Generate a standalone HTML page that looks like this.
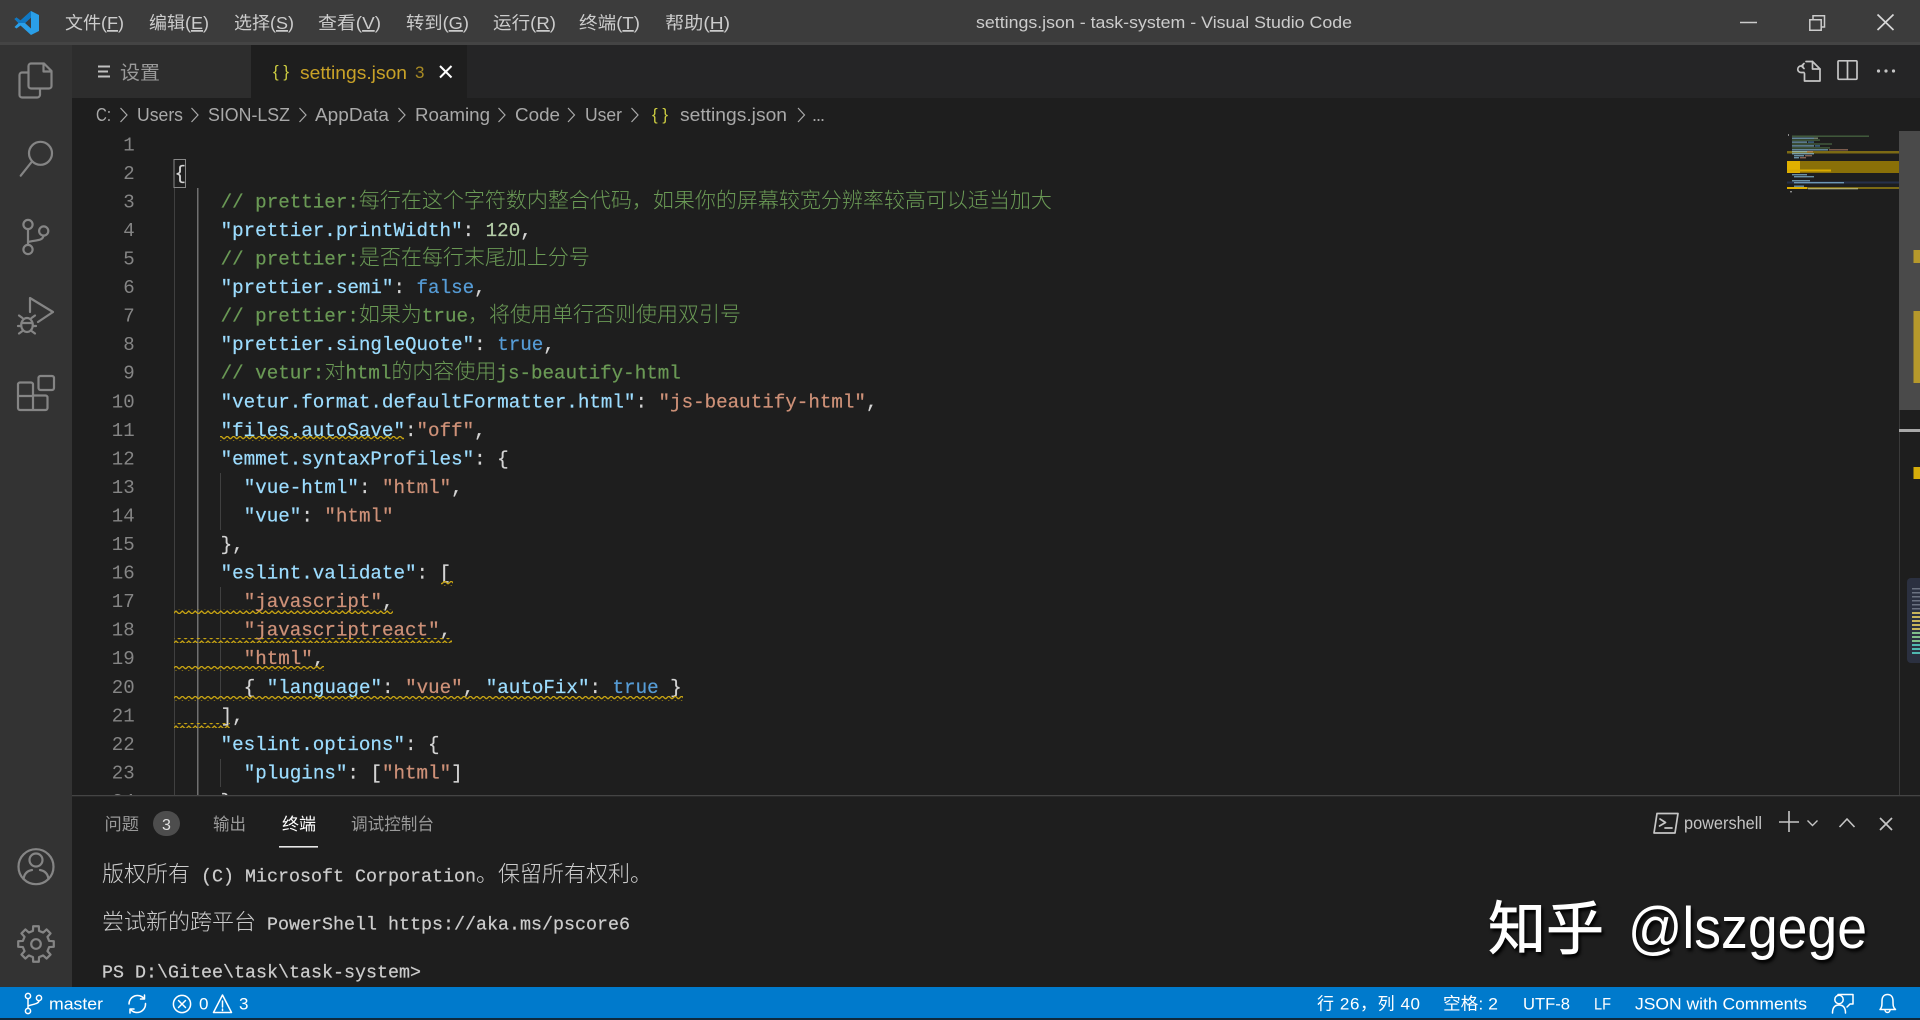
<!DOCTYPE html>
<html lang="zh">
<head>
<meta charset="utf-8">
<title>settings.json - task-system - Visual Studio Code</title>
<style>
html,body{margin:0;padding:0;background:#1e1e1e;width:1920px;height:1020px;overflow:hidden}
svg{display:block;position:absolute;left:0;top:0}
text{white-space:pre}
.ui{font-family:"Liberation Sans","Noto Sans CJK SC",sans-serif;font-size:18px;fill:#cccccc}
.m{font-family:"Liberation Mono","Noto Sans CJK SC",monospace;font-size:19.22px;fill:#d4d4d4;stroke-width:.22}
.ln{fill:#858585;text-anchor:end;font-size:19.08px}
.k{fill:#9cdcfe;stroke:#9cdcfe}.s{fill:#ce9178;stroke:#ce9178}.n{fill:#b5cea8;stroke:#b5cea8}.b{fill:#569cd6;stroke:#569cd6}.c{fill:#6a9955;stroke:#6a9955}.p{fill:#d4d4d4;stroke:#d4d4d4}
.z{font-size:21px;font-family:"Noto Sans CJK SC",sans-serif;font-weight:300;stroke:none}
.t{font-family:"Liberation Mono","Noto Sans CJK SC",monospace;font-size:18.33px;fill:#cccccc;stroke:#cccccc;stroke-width:.22}
.tz{font-size:22px;font-family:"Noto Sans CJK SC",sans-serif;font-weight:300;stroke:none}
.ico{fill:none;stroke:#858585;stroke-width:2.2;stroke-linecap:round;stroke-linejoin:round}
.i2{fill:none;stroke:#c5c5c5;stroke-width:1.7;stroke-linecap:round;stroke-linejoin:round}
.i3{fill:none;stroke:#ffffff;stroke-width:1.5;stroke-linecap:round;stroke-linejoin:round}
.mn{font-size:17.5px}
.bc{fill:#a9a9a9;font-size:18px}
.st{fill:#ffffff;font-size:17px}
.pt{fill:#9a9a9a;font-size:17px}
</style>
</head>
<body>
<svg width="1920" height="1020" viewBox="0 0 1920 1020" xmlns="http://www.w3.org/2000/svg">
<defs>
<pattern id="sq" width="6.4" height="5" patternUnits="userSpaceOnUse">
<path d="M0 4 L3.2 1 L6.4 4" fill="none" stroke="#c9a512" stroke-width="1.3"/>
</pattern>
<clipPath id="ed"><rect x="72" y="130" width="1848" height="665"/></clipPath>
</defs>

<!-- base backgrounds -->
<rect x="0" y="0" width="1920" height="1020" fill="#1e1e1e"/>
<rect x="0" y="0" width="1920" height="45" fill="#3c3c3c"/>
<rect x="0" y="42" width="1920" height="3" fill="#444444"/>
<rect x="0" y="45" width="72" height="942" fill="#333333"/>
<rect x="72" y="45" width="1848" height="53" fill="#252526"/>
<rect x="72" y="45" width="179" height="53" fill="#2d2d2d"/>
<rect x="251" y="45" width="216" height="53" fill="#1e1e1e"/>

<!-- title bar -->
<path fill-rule="evenodd" fill="#2a9fe8" d="M31 11 L20.5 20.5 L16.5 17.5 L14.5 19 L18.5 23 L14.5 27 L16.5 28.5 L20.5 25.5 L31 35 L39 31 V15 Z M31 17.5 L25 23 L31 28.5 Z"/>
<path fill="#0f78c4" d="M31 11 L20.5 20.5 L16.5 17.5 L14.5 19 L18.5 23 L25 23 L31 17.5 Z"/>
<g class="ui mn">
<text x="65" y="29" textLength="59" lengthAdjust="spacingAndGlyphs">文件(<tspan text-decoration="underline">F</tspan>)</text>
<text x="149" y="29" textLength="60" lengthAdjust="spacingAndGlyphs">编辑(<tspan text-decoration="underline">E</tspan>)</text>
<text x="234" y="29" textLength="60" lengthAdjust="spacingAndGlyphs">选择(<tspan text-decoration="underline">S</tspan>)</text>
<text x="318" y="29" textLength="63" lengthAdjust="spacingAndGlyphs">查看(<tspan text-decoration="underline">V</tspan>)</text>
<text x="406" y="29" textLength="63" lengthAdjust="spacingAndGlyphs">转到(<tspan text-decoration="underline">G</tspan>)</text>
<text x="493" y="29" textLength="63" lengthAdjust="spacingAndGlyphs">运行(<tspan text-decoration="underline">R</tspan>)</text>
<text x="579" y="29" textLength="61" lengthAdjust="spacingAndGlyphs">终端(<tspan text-decoration="underline">T</tspan>)</text>
<text x="665" y="29" textLength="65" lengthAdjust="spacingAndGlyphs">帮助(<tspan text-decoration="underline">H</tspan>)</text>
</g>
<text class="ui" x="976" y="28" textLength="376" lengthAdjust="spacingAndGlyphs" style="font-size:17px">settings.json - task-system - Visual Studio Code</text>
<!-- window controls -->
<path d="M1740 22.5 H1757" stroke="#cccccc" stroke-width="1.5" fill="none"/>
<path d="M1809.8 19.8 H1821.2 V30.2 H1809.8 Z M1813 19.5 V15.8 H1824.5 V27 H1821" stroke="#cccccc" stroke-width="1.5" fill="none"/>
<path d="M1877.5 14.5 L1893.5 30 M1893.5 14.5 L1877.5 30" stroke="#d8d8d8" stroke-width="1.7" fill="none"/>

<!-- tabs -->
<path d="M98 66.5 H110 M98 71.5 H108 M98 76.5 H110" stroke="#c0c0c0" stroke-width="2" fill="none"/>
<text class="ui" x="120" y="79" textLength="40" lengthAdjust="spacingAndGlyphs" style="fill:#9a9a9a;font-size:19px">设置</text>
<text class="ui" x="273" y="77" textLength="16" lengthAdjust="spacing" style="fill:#cbcb41;font-size:17px">{}</text>
<text class="ui" x="300" y="79" textLength="107" lengthAdjust="spacingAndGlyphs" style="fill:#c9a227;font-size:18px">settings.json</text>
<text class="ui" x="415" y="78" style="fill:#a88a24;font-size:17px">3</text>
<path d="M440 66 L451.5 77.5 M451.5 66 L440 77.5" stroke="#ffffff" stroke-width="2" fill="none"/>
<!-- editor actions -->
<path class="i2" d="M1806 61.5 H1812.5 L1820 69 V81 H1804.5 V73.5"/>
<path class="i2" d="M1812.5 61.5 V69 H1820"/>
<path class="i2" d="M1803 66 H1801 A3.2 3.2 0 0 0 1801 72.5 H1804 M1804 63.5 L1801.5 66 L1804 68.5" stroke-width="1.4"/>
<rect class="i2" x="1838" y="60.8" width="19" height="18.5" rx="1"/>
<path class="i2" d="M1847.5 61 V79"/>
<circle cx="1878.5" cy="71" r="1.6" fill="#c5c5c5"/><circle cx="1886" cy="71" r="1.6" fill="#c5c5c5"/><circle cx="1893.5" cy="71" r="1.6" fill="#c5c5c5"/>

<!-- breadcrumbs -->
<g class="ui bc">
<text x="96" y="121" textLength="15" lengthAdjust="spacingAndGlyphs">C:</text>
<text x="137" y="121" textLength="46" lengthAdjust="spacingAndGlyphs">Users</text>
<text x="208" y="121" textLength="82" lengthAdjust="spacingAndGlyphs">SION-LSZ</text>
<text x="315" y="121" textLength="74" lengthAdjust="spacingAndGlyphs">AppData</text>
<text x="415" y="121" textLength="75" lengthAdjust="spacingAndGlyphs">Roaming</text>
<text x="515" y="121" textLength="45" lengthAdjust="spacingAndGlyphs">Code</text>
<text x="585" y="121" textLength="37" lengthAdjust="spacingAndGlyphs">User</text>
<text x="680" y="121" textLength="107" lengthAdjust="spacingAndGlyphs">settings.json</text>
<text x="812" y="121" textLength="13" lengthAdjust="spacing">...</text>
</g>
<text class="ui" x="652" y="120" textLength="16" lengthAdjust="spacing" style="fill:#cbcb41;font-size:17px">{}</text>
<path d="M120.5 108 L127 115 L120.5 122 M191.5 108 L198 115 L191.5 122 M299.5 108 L306 115 L299.5 122 M398.5 108 L405 115 L398.5 122 M498.5 108 L505 115 L498.5 122 M568 108 L574.5 115 L568 122 M631.5 108 L638 115 L631.5 122 M798 108 L804.5 115 L798 122" stroke="#a9a9a9" stroke-width="1.2" fill="none"/>

<!-- editor -->
<g clip-path="url(#ed)">
<!-- indent guides -->
<rect x="174" y="188" width="1" height="610" fill="#404040"/>
<rect x="197" y="188" width="1.5" height="610" fill="#707070"/>
<rect x="220" y="473" width="1" height="57" fill="#404040"/>
<rect x="220" y="587" width="1" height="114" fill="#404040"/>
<rect x="220" y="759" width="1" height="28" fill="#404040"/>
<rect x="174" y="159.5" width="11.5" height="28" fill="none" stroke="#888888" stroke-width="1"/>

<g class="m ln" transform="translate(0 -1.2)">
<text x="134.7" y="151.5">1</text>
<text x="134.7" y="180">2</text>
<text x="134.7" y="208.6">3</text>
<text x="134.7" y="237.2">4</text>
<text x="134.7" y="265.7">5</text>
<text x="134.7" y="294.3">6</text>
<text x="134.7" y="322.8">7</text>
<text x="134.7" y="351.4">8</text>
<text x="134.7" y="379.9">9</text>
<text x="134.7" y="408.5">10</text>
<text x="134.7" y="437">11</text>
<text x="134.7" y="465.6">12</text>
<text x="134.7" y="494.1">13</text>
<text x="134.7" y="522.7">14</text>
<text x="134.7" y="551.2">15</text>
<text x="134.7" y="579.8">16</text>
<text x="134.7" y="608.3">17</text>
<text x="134.7" y="636.9">18</text>
<text x="134.7" y="665.4">19</text>
<text x="134.7" y="694">20</text>
<text x="134.7" y="722.5">21</text>
<text x="134.7" y="751.1">22</text>
<text x="134.7" y="779.6">23</text>
<text x="134.7" y="808.2">24</text>
</g>

<g class="m" transform="translate(0 -1.2)">
<text x="174.5" y="180"><tspan class="p">{</tspan></text>
<text x="220.6" y="208.6"><tspan class="c">// prettier:</tspan><tspan class="c z">每行在这个字符数内整合代码，如果你的屏幕较宽分辨率较高可以适当加大</tspan></text>
<text x="220.6" y="237.2"><tspan class="k">"prettier.printWidth"</tspan><tspan class="p">: </tspan><tspan class="n">120</tspan><tspan class="p">,</tspan></text>
<text x="220.6" y="265.7"><tspan class="c">// prettier:</tspan><tspan class="c z">是否在每行末尾加上分号</tspan></text>
<text x="220.6" y="294.3"><tspan class="k">"prettier.semi"</tspan><tspan class="p">: </tspan><tspan class="b">false</tspan><tspan class="p">,</tspan></text>
<text x="220.6" y="322.8"><tspan class="c">// prettier:</tspan><tspan class="c z">如果为</tspan><tspan class="c">true</tspan><tspan class="c z">，将使用单行否则使用双引号</tspan></text>
<text x="220.6" y="351.4"><tspan class="k">"prettier.singleQuote"</tspan><tspan class="p">: </tspan><tspan class="b">true</tspan><tspan class="p">,</tspan></text>
<text x="220.6" y="379.9"><tspan class="c">// vetur:</tspan><tspan class="c z">对</tspan><tspan class="c">html</tspan><tspan class="c z">的内容使用</tspan><tspan class="c">js-beautify-html</tspan></text>
<text x="220.6" y="408.5"><tspan class="k">"vetur.format.defaultFormatter.html"</tspan><tspan class="p">: </tspan><tspan class="s">"js-beautify-html"</tspan><tspan class="p">,</tspan></text>
<text x="220.6" y="437"><tspan class="k">"files.autoSave"</tspan><tspan class="p">:</tspan><tspan class="s">"off"</tspan><tspan class="p">,</tspan></text>
<text x="220.6" y="465.6"><tspan class="k">"emmet.syntaxProfiles"</tspan><tspan class="p">: {</tspan></text>
<text x="243.7" y="494.1"><tspan class="k">"vue-html"</tspan><tspan class="p">: </tspan><tspan class="s">"html"</tspan><tspan class="p">,</tspan></text>
<text x="243.7" y="522.7"><tspan class="k">"vue"</tspan><tspan class="p">: </tspan><tspan class="s">"html"</tspan></text>
<text x="220.6" y="551.2"><tspan class="p">},</tspan></text>
<text x="220.6" y="579.8"><tspan class="k">"eslint.validate"</tspan><tspan class="p">: [</tspan></text>
<text x="243.7" y="608.3"><tspan class="s">"javascript"</tspan><tspan class="p">,</tspan></text>
<text x="243.7" y="636.9"><tspan class="s">"javascriptreact"</tspan><tspan class="p">,</tspan></text>
<text x="243.7" y="665.4"><tspan class="s">"html"</tspan><tspan class="p">,</tspan></text>
<text x="243.7" y="694"><tspan class="p">{ </tspan><tspan class="k">"language"</tspan><tspan class="p">: </tspan><tspan class="s">"vue"</tspan><tspan class="p">, </tspan><tspan class="k">"autoFix"</tspan><tspan class="p">: </tspan><tspan class="b">true</tspan><tspan class="p"> }</tspan></text>
<text x="220.6" y="722.5"><tspan class="p">],</tspan></text>
<text x="220.6" y="751.1"><tspan class="k">"eslint.options"</tspan><tspan class="p">: {</tspan></text>
<text x="243.7" y="779.6"><tspan class="k">"plugins"</tspan><tspan class="p">: [</tspan><tspan class="s">"html"</tspan><tspan class="p">]</tspan></text>
<text x="220.6" y="808.2"><tspan class="p">}</tspan></text>
</g>

<!-- squiggles -->
<rect x="220" y="436" width="184" height="5" fill="url(#sq)"/>
<rect x="441" y="581" width="12" height="5" fill="url(#sq)"/>
<rect x="174" y="609" width="219" height="5" fill="url(#sq)"/>
<rect x="174" y="638" width="278" height="5" fill="url(#sq)"/>
<rect x="174" y="666" width="150" height="5" fill="url(#sq)"/>
<rect x="174" y="696" width="509" height="5" fill="url(#sq)"/>
<rect x="174" y="723" width="56" height="5" fill="url(#sq)"/>
</g>

<!-- minimap -->
<rect x="1787" y="151" width="112" height="2.5" fill="#7c6a14"/>
<rect x="1787" y="161" width="112" height="12" fill="#8a7008"/>
<rect x="1787" y="161" width="13" height="12" fill="#e0b000"/>
<rect x="1787" y="169.5" width="44" height="2" fill="#d8aa00"/>
<rect x="1787" y="181.5" width="112" height="2" fill="#26304a"/>
<rect x="1787" y="187" width="112" height="2" fill="#7c6a14"/>
<rect x="1787" y="187" width="20" height="2" fill="#e0b000"/>
<g opacity="0.6">
<rect x="1788" y="134" width="1" height="2" fill="#d4d4d4"/>
<rect x="1792" y="135.5" width="77" height="1.4" fill="#5c8a52"/>
<rect x="1792" y="137.5" width="22" height="1.4" fill="#9cdcfe"/><rect x="1814" y="137.5" width="4" height="1.4" fill="#b5cea8"/>
<rect x="1792" y="139.4" width="28" height="1.4" fill="#5c8a52"/>
<rect x="1792" y="141.4" width="15" height="1.4" fill="#9cdcfe"/><rect x="1808" y="141.4" width="6" height="1.4" fill="#569cd6"/>
<rect x="1792" y="143.3" width="40" height="1.4" fill="#5c8a52"/>
<rect x="1792" y="145.2" width="22" height="1.4" fill="#9cdcfe"/><rect x="1815" y="145.2" width="5" height="1.4" fill="#569cd6"/>
<rect x="1792" y="147.2" width="38" height="1.4" fill="#5c8a52"/>
<rect x="1792" y="149.1" width="36" height="1.4" fill="#9cdcfe"/><rect x="1829" y="149.1" width="19" height="1.4" fill="#ce9178"/>
<rect x="1792" y="151" width="15" height="1.4" fill="#9cdcfe"/><rect x="1807" y="151" width="6" height="1.4" fill="#ce9178"/>
<rect x="1792" y="153" width="22" height="1.4" fill="#9cdcfe"/>
<rect x="1794" y="155" width="10" height="1.4" fill="#9cdcfe"/><rect x="1805" y="155" width="7" height="1.4" fill="#ce9178"/>
<rect x="1794" y="157" width="5" height="1.4" fill="#9cdcfe"/><rect x="1800" y="157" width="6" height="1.4" fill="#ce9178"/>
<rect x="1792" y="174" width="15" height="1.4" fill="#9cdcfe"/>
<rect x="1794" y="176" width="20" height="1.4" fill="#9cdcfe"/>
<rect x="1792" y="180" width="18" height="1.4" fill="#9cdcfe"/>
<rect x="1794" y="182" width="50" height="1.4" fill="#9cdcfe"/>
<rect x="1794" y="185.5" width="10" height="1.4" fill="#9cdcfe"/>
<rect x="1808" y="188" width="50" height="1.4" fill="#d8d8a0"/>
<rect x="1790" y="191" width="2" height="1.4" fill="#d4d4d4"/>
</g>

<!-- overview ruler & slider -->
<rect x="1899" y="131" width="21" height="279" fill="#4a4a4a"/>
<rect x="1899" y="410" width="1" height="385" fill="#3a3a3a"/>
<rect x="1913.5" y="250" width="6.5" height="13" fill="#b5982b"/>
<rect x="1913.5" y="311" width="6.5" height="72" fill="#b5982b"/>
<rect x="1899" y="429" width="21" height="3" fill="#a8a8a8"/>
<rect x="1913.5" y="467" width="6.5" height="12" fill="#d6ad0a"/>
<!-- floating widget at right edge -->
<rect x="1907" y="578" width="20" height="85" rx="4" fill="#2b3040"/>
<g fill="#6a7180">
<rect x="1912" y="588" width="8" height="1.5"/><rect x="1912" y="592" width="8" height="1.5"/><rect x="1912" y="596" width="8" height="1.5"/><rect x="1912" y="600" width="8" height="1.5"/><rect x="1912" y="604" width="8" height="1.5"/><rect x="1912" y="608" width="8" height="1.5"/>
</g>
<g fill="#c8b45a">
<rect x="1912" y="612" width="8" height="2"/><rect x="1912" y="616" width="8" height="2"/><rect x="1912" y="620" width="8" height="2"/><rect x="1912" y="624" width="8" height="2"/><rect x="1912" y="628" width="8" height="2"/>
</g>
<g fill="#7fbf8a">
<rect x="1912" y="632" width="8" height="2"/><rect x="1912" y="636" width="8" height="2"/><rect x="1912" y="640" width="8" height="2"/>
</g>
<g fill="#4fb8b0">
<rect x="1912" y="644" width="8" height="2"/><rect x="1912" y="648" width="8" height="2"/><rect x="1912" y="652" width="8" height="2"/>
</g>

<!-- panel -->
<rect x="72" y="796" width="1848" height="191" fill="#1e1e1e"/>
<rect x="72" y="795" width="1848" height="1.3" fill="#444444"/>
<g class="ui pt">
<text x="104.5" y="830" textLength="34.5" lengthAdjust="spacingAndGlyphs">问题</text>
<text x="213" y="830" textLength="33" lengthAdjust="spacingAndGlyphs">输出</text>
<text x="282" y="830" textLength="34" lengthAdjust="spacingAndGlyphs" style="fill:#ffffff">终端</text>
<text x="351" y="830" textLength="83" lengthAdjust="spacingAndGlyphs">调试控制台</text>
</g>
<rect x="153" y="811" width="27" height="25" rx="12.5" fill="#4d4d4d"/>
<text class="ui" x="166.5" y="830" text-anchor="middle" style="font-size:16px;fill:#e0e0e0">3</text>
<rect x="279" y="846" width="39" height="1.6" fill="#e7e7e7"/>

<path class="i2" d="M1657 813.5 H1678 L1675 833 H1654 Z" stroke-width="1.4"/>
<path class="i2" d="M1660 819 L1665.5 822.5 L1659.5 826 M1665 828 H1672" stroke-width="1.4"/>
<text class="ui" x="1684" y="829" textLength="78" lengthAdjust="spacingAndGlyphs" style="font-size:17.5px;fill:#c5c5c5">powershell</text>
<path d="M1779 822 H1799 M1789 811 V832" stroke="#c5c5c5" stroke-width="1.6" fill="none"/>
<path d="M1807.5 820.5 L1812.5 825.5 L1817.5 820.5" stroke="#c5c5c5" stroke-width="1.4" fill="none"/>
<path d="M1839.5 827 L1847 819 L1854.5 827" stroke="#c5c5c5" stroke-width="1.6" fill="none"/>
<path d="M1880 818 L1892 830 M1892 818 L1880 830" stroke="#c5c5c5" stroke-width="1.7" fill="none"/>

<g transform="translate(0 -1.5)">
<text class="t" x="102" y="883"><tspan class="tz">版权所有</tspan> (C) Microsoft Corporation<tspan class="tz">。保留所有权利。</tspan></text>
<text class="t" x="102" y="931"><tspan class="tz">尝试新的跨平台</tspan> PowerShell https://aka.ms/pscore6</text>
<text class="t" x="102" y="979">PS D:\Gitee\task\task-system&gt;</text>
</g>

<!-- watermark -->
<g style="filter:drop-shadow(2px 3px 1.5px #000000)">
<text x="1488" y="949" textLength="116" lengthAdjust="spacingAndGlyphs" style="font-family:'Noto Sans CJK SC',sans-serif;font-size:58px;fill:#ffffff;stroke:#ffffff;stroke-width:.8">知乎</text>
<text x="1628" y="948" textLength="239" lengthAdjust="spacingAndGlyphs" style="font-family:'Liberation Sans',sans-serif;font-size:58px;fill:#ffffff">@lszgege</text>
</g>

<!-- activity bar icons -->
<path class="ico" d="M28.5 72.5 H22 A2.5 2.5 0 0 0 19.5 75 V95 A2.5 2.5 0 0 0 22 97.5 H37 A3 3 0 0 0 40 95 V89"/>
<path class="ico" d="M31 63.5 H44 L51.5 71 V86 A2.5 2.5 0 0 1 49 88.5 H31 A2.5 2.5 0 0 1 28.5 86 V66 A2.5 2.5 0 0 1 31 63.5 Z"/>
<path class="ico" d="M43.5 64 V71.5 H51" stroke-width="1.5"/>
<circle class="ico" cx="40.5" cy="153.3" r="11.5"/>
<path class="ico" d="M32 161.5 L20.7 175.7"/>
<circle class="ico" cx="28" cy="224.5" r="4.6"/>
<circle class="ico" cx="43.7" cy="231" r="4.6"/>
<circle class="ico" cx="28" cy="249.5" r="4.6"/>
<path class="ico" d="M28 229 V245 M43.5 235.5 C43 241 36 240 28 242"/>
<path class="ico" d="M30 312 V298 L53 312 L38 322"/>
<ellipse class="ico" cx="27" cy="325" rx="5.8" ry="7"/>
<path class="ico" d="M21.5 323 H32.5 M22.5 318 L19 315.5 M31.5 318 L35 315.5 M21 326 H18 M33 326 H36 M22.5 331 L19 333.5 M31.5 331 L35 333.5" stroke-width="1.7"/>
<path class="ico" d="M20 382.5 H31 A2 2 0 0 1 33 384.5 V395.5 H45.5 A2 2 0 0 1 47.5 397.5 V408 A2 2 0 0 1 45.5 410 H20 A2 2 0 0 1 18 408 V384.5 A2 2 0 0 1 20 382.5 Z M18 396 H33 V410"/>
<rect class="ico" x="38.5" y="376" width="15.5" height="14" rx="2"/>
<circle class="ico" cx="36" cy="866.7" r="17.5"/>
<circle class="ico" cx="36" cy="860" r="6.5"/>
<path class="ico" d="M23.5 879 C24.5 872 29 870.5 32 870 M48.5 879 C47.5 872 43 870.5 40 870"/>
<g transform="translate(36 944)">
<path class="ico" d="M13.15 -3.04 L17.78 -2.82 L17.78 2.82 L13.15 3.04 L11.45 7.15 L14.56 10.58 L10.58 14.56 L7.15 11.45 L3.04 13.15 L2.82 17.78 L-2.82 17.78 L-3.04 13.15 L-7.15 11.45 L-10.58 14.56 L-14.56 10.58 L-11.45 7.15 L-13.15 3.04 L-17.78 2.82 L-17.78 -2.82 L-13.15 -3.04 L-11.45 -7.15 L-14.56 -10.58 L-10.58 -14.56 L-7.15 -11.45 L-3.04 -13.15 L-2.82 -17.78 L2.82 -17.78 L3.04 -13.15 L7.15 -11.45 L10.58 -14.56 L14.56 -10.58 L11.45 -7.15 Z"/>
<circle class="ico" cx="0" cy="0" r="4.8"/>
</g>

<!-- status bar -->
<rect x="0" y="987" width="1920" height="31" fill="#007acc"/>
<rect x="0" y="1018" width="1920" height="2" fill="#0e2a3d"/>
<circle class="i3" cx="28" cy="996" r="2.6"/><circle class="i3" cx="39" cy="998" r="2.6"/><circle class="i3" cx="28" cy="1011" r="2.6"/>
<path class="i3" d="M28 998.6 V1008.4 M39 1000.6 C39 1004 33 1004 28 1006"/>
<g class="ui st">
<text x="49" y="1009.5" textLength="54" lengthAdjust="spacingAndGlyphs">master</text>
<text x="199" y="1009.5">0</text>
<text x="239" y="1009.5">3</text>
<text x="1317" y="1009.5" textLength="103" lengthAdjust="spacing">行 26，列 40</text>
<text x="1443" y="1009.5" textLength="55" lengthAdjust="spacingAndGlyphs">空格: 2</text>
<text x="1523" y="1009.5" textLength="47" lengthAdjust="spacingAndGlyphs">UTF-8</text>
<text x="1594" y="1009.5" textLength="17" lengthAdjust="spacingAndGlyphs">LF</text>
<text x="1635" y="1009.5" textLength="172" lengthAdjust="spacingAndGlyphs">JSON with Comments</text>
</g>
<path class="i3" d="M129 1004 A8.5 8.5 0 0 1 144 998.5 M145.5 1003.5 A8.5 8.5 0 0 1 130.5 1009.5"/>
<path class="i3" d="M140.5 999 L144.5 999 L144.5 995 M134 1009 L130 1009 L130 1013"/>
<circle class="i3" cx="182" cy="1004" r="8.6"/>
<path class="i3" d="M178.5 1000.5 L185.5 1007.5 M185.5 1000.5 L178.5 1007.5"/>
<path class="i3" d="M222.5 995 L231.5 1012.5 H213.5 Z"/>
<path class="i3" d="M222.5 1001 V1007 M222.5 1009 V1010.5"/>
<!-- feedback -->
<circle class="i3" cx="1839" cy="999.5" r="4.2"/>
<path class="i3" d="M1832.5 1013 C1832.5 1007.5 1835 1005 1839 1005 C1843 1005 1845.5 1007.5 1845.5 1013"/>
<path class="i3" d="M1838 995.5 V994.5 H1853 V1004 H1850 L1847 1007" stroke-width="1.4"/>
<!-- bell -->
<path class="i3" d="M1880 1009.5 C1882 1007.5 1882 1005 1882 1001 C1882 997 1884 994.5 1887.5 994.5 C1891 994.5 1893 997 1893 1001 C1893 1005 1893 1007.5 1895.5 1009.5 Z"/>
<path class="i3" d="M1885 1010 A2.5 2.5 0 0 0 1890 1010"/>
</svg>
</body>
</html>
